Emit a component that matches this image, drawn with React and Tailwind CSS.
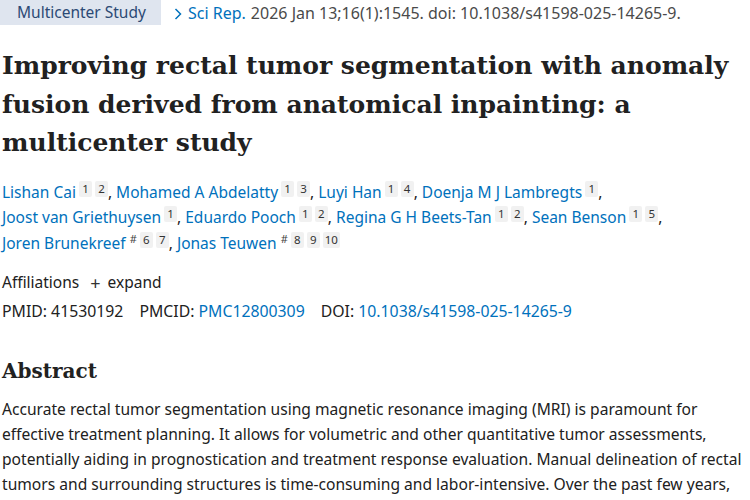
import React from 'react';

const authors = [
  { name: 'Lishan Cai', refs: ['1', '2'] },
  { name: 'Mohamed A Abdelatty', refs: ['1', '3'] },
  { name: 'Luyi Han', refs: ['1', '4'] },
  { name: 'Doenja M J Lambregts', refs: ['1'], br: true },
  { name: 'Joost van Griethuysen', refs: ['1'] },
  { name: 'Eduardo Pooch', refs: ['1', '2'] },
  { name: 'Regina G H Beets-Tan', refs: ['1', '2'] },
  { name: 'Sean Benson', refs: ['1', '5'], br: true },
  { name: 'Joren Brunekreef', refs: ['#', '6', '7'] },
  { name: 'Jonas Teuwen', refs: ['#', '8', '9', '10'] },
];

const Sup = ({ r }) =>
  r === '#' ? (
    <span className="ml-[4px] inline-block align-[6px] text-[11px] leading-none text-[#444]">#</span>
  ) : (
    <span className="ml-[3px] inline-block h-[16px] min-w-[13px] rounded-[2px] bg-[#f1f1f1] px-[2px] text-center align-[5px] text-[11.5px] leading-[16px] text-[#333]">
      {r}
    </span>
  );

export default function App() {
  return (
    <div className="h-[500px] w-[750px] overflow-hidden bg-white font-['Noto_Sans',sans-serif] text-[#212121]">
      {/* Top line */}
      <div className="flex items-center text-[16px]">
        <span className="flex h-[25px] w-[161px] items-center bg-[#dfe5ef] pl-[17px] text-[15.5px] text-[#2c4a75]">Multicenter Study</span>
        <span className="ml-[13px] text-[#0071bc]">
          <svg className="mr-[6px] inline-block h-[12px] w-[8px] align-[-1px]" viewBox="0 0 8 12" fill="none" stroke="currentColor" strokeWidth="1.5">
            <path d="M1.5 1l5 5-5 5" />
          </svg>
          Sci Rep.
        </span>
        <span className="ml-[5px] text-[#4a4a4a]">2026 Jan 13;16(1):1545. doi: 10.1038/s41598-025-14265-9.</span>
      </div>

      <div className="pl-[2px] pr-[4px]">
        <h1 className="mt-[22px] font-['DejaVu_Serif',serif] text-[25px] font-bold leading-[38.5px] text-[#212121]">
          Improving rectal tumor segmentation with anomaly fusion derived from anatomical inpainting: a multicenter study
        </h1>

        <div className="mt-[17px] text-[15.5px] leading-[25.5px] text-[#0071bc]">
          {authors.map((a, i) => (
            <span key={i}>
              <span>{a.name}</span>
              {a.refs.map((r, j) => (
                <Sup key={j} r={r} />
              ))}
              {i < authors.length - 1 && <span className="text-[#212121]">, </span>}
              {a.br && <br />}
            </span>
          ))}
        </div>

        <div className="mt-[15px] flex items-center text-[15.5px] text-[#212121]">
          <span>Affiliations</span>
          <span className="ml-[11px] text-[18px] leading-none text-[#333]">+</span>
          <span className="ml-[7px]">expand</span>
        </div>

        <div className="mt-[6px] flex text-[15.8px] text-[#212121]">
          <span>PMID: 41530192</span>
          <span className="ml-[16px]">
            PMCID: <span className="text-[#0071bc]">PMC12800309</span>
          </span>
          <span className="ml-[16px]">
            DOI: <span className="text-[#0071bc]">10.1038/s41598-025-14265-9</span>
          </span>
        </div>

        <h2 className="mt-[33px] font-['DejaVu_Serif',serif] text-[20px] font-bold leading-[28px] text-[#212121]">Abstract</h2>

        <p className="mt-[12px] text-[15.6px] leading-[25px] text-[#212121]">
          Accurate rectal tumor segmentation using magnetic resonance imaging (MRI) is paramount for effective treatment planning. It allows for volumetric and other quantitative tumor assessments, potentially aiding in prognostication and treatment response evaluation. Manual delineation of rectal tumors and surrounding structures is time-consuming and labor-intensive. Over the past few years,
        </p>
      </div>
    </div>
  );
}
